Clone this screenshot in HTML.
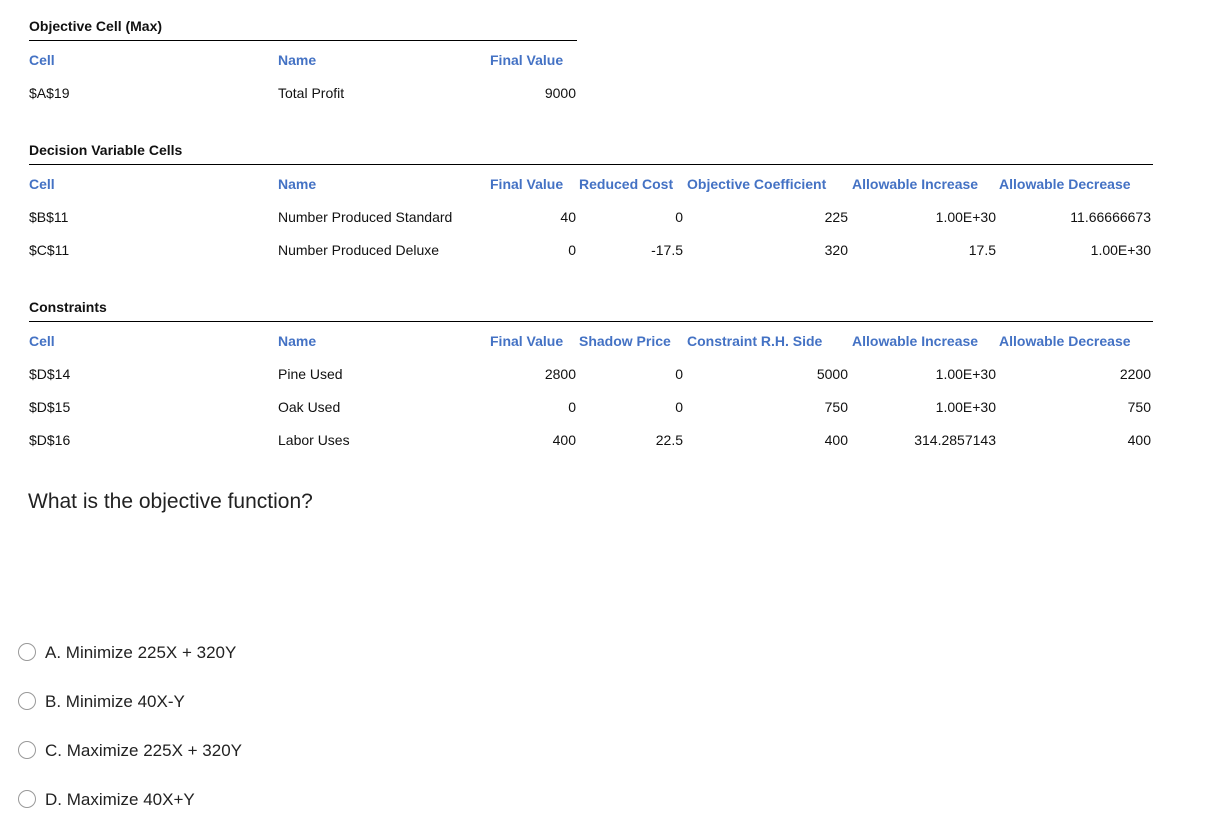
<!DOCTYPE html>
<html><head><style>
body{margin:0;width:1207px;height:825px;background:#fff;font-family:"Liberation Sans",sans-serif;color:#111;position:relative;overflow:hidden}
.t{position:absolute;font-size:14px;line-height:16px;white-space:nowrap}
.b{font-weight:bold}
.h{color:#4472c4;font-weight:bold;font-size:14px;letter-spacing:0}
.r{text-align:right}
.line{position:absolute;height:1px;background:#000;left:29px}
.q{position:absolute;left:28px;top:490px;font-size:21px;color:#222}
.opt{position:absolute;left:18px;font-size:17px;color:#222;line-height:20px}
.opt span{display:inline-block;width:18px;height:18px;border:1px solid #999;border-radius:50%;vertical-align:middle;margin-right:9px;margin-top:-3px;box-sizing:border-box}
</style></head><body>
<div class="t b" style="left:29px;top:18px">Objective Cell (Max)</div>
<div class="line" style="top:40px;width:548px"></div>
<div class="t h" style="left:29px;top:52px">Cell</div>
<div class="t h" style="left:278px;top:52px">Name</div>
<div class="t h" style="left:490px;top:52px">Final Value</div>
<div class="t" style="left:29px;top:85px">$A$19</div>
<div class="t" style="left:278px;top:85px">Total Profit</div>
<div class="t r" style="left:476px;width:100px;top:85px">9000</div>

<div class="t b" style="left:29px;top:142px">Decision Variable Cells</div>
<div class="line" style="top:164px;width:1124px"></div>
<div class="t h" style="left:29px;top:176px">Cell</div>
<div class="t h" style="left:278px;top:176px">Name</div>
<div class="t h" style="left:490px;top:176px">Final Value</div>
<div class="t h" style="left:579px;top:176px">Reduced Cost</div>
<div class="t h" style="left:687px;top:176px">Objective Coefficient</div>
<div class="t h" style="left:852px;top:176px">Allowable Increase</div>
<div class="t h" style="left:999px;top:176px">Allowable Decrease</div>
<div class="t" style="left:29px;top:209px">$B$11</div>
<div class="t" style="left:278px;top:209px">Number Produced Standard</div>
<div class="t r" style="left:476px;width:100px;top:209px">40</div>
<div class="t r" style="left:583px;width:100px;top:209px">0</div>
<div class="t r" style="left:748px;width:100px;top:209px">225</div>
<div class="t r" style="left:896px;width:100px;top:209px">1.00E+30</div>
<div class="t r" style="left:1011px;width:140px;top:209px">11.66666673</div>
<div class="t" style="left:29px;top:242px">$C$11</div>
<div class="t" style="left:278px;top:242px">Number Produced Deluxe</div>
<div class="t r" style="left:476px;width:100px;top:242px">0</div>
<div class="t r" style="left:583px;width:100px;top:242px">-17.5</div>
<div class="t r" style="left:748px;width:100px;top:242px">320</div>
<div class="t r" style="left:896px;width:100px;top:242px">17.5</div>
<div class="t r" style="left:1011px;width:140px;top:242px">1.00E+30</div>

<div class="t b" style="left:29px;top:299px">Constraints</div>
<div class="line" style="top:321px;width:1124px"></div>
<div class="t h" style="left:29px;top:333px">Cell</div>
<div class="t h" style="left:278px;top:333px">Name</div>
<div class="t h" style="left:490px;top:333px">Final Value</div>
<div class="t h" style="left:579px;top:333px">Shadow Price</div>
<div class="t h" style="left:687px;top:333px">Constraint R.H. Side</div>
<div class="t h" style="left:852px;top:333px">Allowable Increase</div>
<div class="t h" style="left:999px;top:333px">Allowable Decrease</div>
<div class="t" style="left:29px;top:366px">$D$14</div>
<div class="t" style="left:278px;top:366px">Pine Used</div>
<div class="t r" style="left:476px;width:100px;top:366px">2800</div>
<div class="t r" style="left:583px;width:100px;top:366px">0</div>
<div class="t r" style="left:748px;width:100px;top:366px">5000</div>
<div class="t r" style="left:896px;width:100px;top:366px">1.00E+30</div>
<div class="t r" style="left:1011px;width:140px;top:366px">2200</div>
<div class="t" style="left:29px;top:399px">$D$15</div>
<div class="t" style="left:278px;top:399px">Oak Used</div>
<div class="t r" style="left:476px;width:100px;top:399px">0</div>
<div class="t r" style="left:583px;width:100px;top:399px">0</div>
<div class="t r" style="left:748px;width:100px;top:399px">750</div>
<div class="t r" style="left:896px;width:100px;top:399px">1.00E+30</div>
<div class="t r" style="left:1011px;width:140px;top:399px">750</div>
<div class="t" style="left:29px;top:432px">$D$16</div>
<div class="t" style="left:278px;top:432px">Labor Uses</div>
<div class="t r" style="left:476px;width:100px;top:432px">400</div>
<div class="t r" style="left:583px;width:100px;top:432px">22.5</div>
<div class="t r" style="left:748px;width:100px;top:432px">400</div>
<div class="t r" style="left:896px;width:100px;top:432px">314.2857143</div>
<div class="t r" style="left:1011px;width:140px;top:432px">400</div>

<div class="q">What is the objective function?</div>
<div class="opt" style="top:643px"><span></span>A. Minimize 225X + 320Y</div>
<div class="opt" style="top:692px"><span></span>B. Minimize 40X-Y</div>
<div class="opt" style="top:741px"><span></span>C. Maximize 225X + 320Y</div>
<div class="opt" style="top:790px"><span></span>D. Maximize 40X+Y</div>
</body></html>
